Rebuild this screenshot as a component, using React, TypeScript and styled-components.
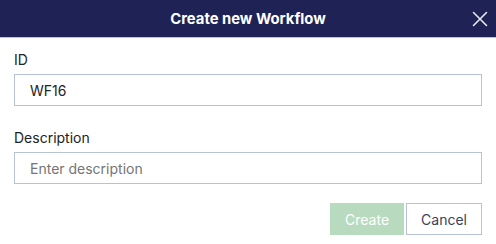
import styled, { createGlobalStyle } from 'styled-components'

const GlobalStyle = createGlobalStyle`
  html, body {
    margin: 0;
    padding: 0;
    background: #fff;
  }
  body {
    font-family: Inter, "Noto Sans", sans-serif;
  }
`

const App = () => {
    return (
        <>
            <GlobalStyle />
            <Dialog>
                <Header>
                    <Title>Create new Workflow</Title>
                    <CloseButton aria-label="Close">
                        <svg width="16" height="16" viewBox="0 0 16 16">
                            <path d="M1.5 1.5 L14.5 14.5 M14.5 1.5 L1.5 14.5" stroke="#e8e9f0" strokeWidth="1.6" strokeLinecap="round" />
                        </svg>
                    </CloseButton>
                </Header>
                <Body>
                    <Field>
                        <Label>ID</Label>
                        <Input defaultValue="WF16" />
                    </Field>
                    <Field>
                        <Label>Description</Label>
                        <Input placeholder="Enter description" />
                    </Field>
                </Body>
                <Footer>
                    <Button $primary disabled>Create</Button>
                    <Button>Cancel</Button>
                </Footer>
            </Dialog>
        </>
    );
}

const Dialog = styled.div`
  width: 496px;
  height: 244px;
  display: flex;
  flex-direction: column;
  background: #fff;
`

const Header = styled.div`
  position: relative;
  height: 37px;
  display: flex;
  align-items: center;
  justify-content: center;
  background: #1f2254;
  border-bottom: 1px solid #b9c4d6;
`

const Title = styled.h1`
  margin: 0;
  color: #fff;
  font-size: 14.8px;
  font-weight: 700;
`

const CloseButton = styled.button`
  position: absolute;
  right: 8px;
  top: 11px;
  padding: 0;
  border: none;
  background: none;
  display: flex;
  cursor: pointer;
`

const Body = styled.div`
  display: flex;
  flex-direction: column;
  gap: 24px;
  padding: 14px 14px 0 14px;
`

const Field = styled.div`
  display: flex;
  flex-direction: column;
  gap: 6px;
`

const Label = styled.label`
  color: #222;
  font-size: 14px;
  line-height: 16px;
`

const Input = styled.input`
  box-sizing: border-box;
  width: 100%;
  height: 32px;
  padding: 0 15px;
  border: 1px solid #b7c3d5;
  border-radius: 0;
  font-family: inherit;
  font-size: 14px;
  color: #222;
  outline: none;
  ::placeholder {
    color: #9a9ea6;
  }
`

const Footer = styled.div`
  display: flex;
  justify-content: flex-end;
  gap: 2px;
  padding: 19px 14px 0 14px;
`

const Button = styled.button<{ $primary?: boolean }>`
  box-sizing: border-box;
  height: 32px;
  padding: 0 14px;
  font-family: inherit;
  font-size: 14px;
  border-radius: 0;
  border: 1px solid ${p => (p.$primary ? '#b8dbbf' : '#b7c3d5')};
  background: ${p => (p.$primary ? '#b8dbbf' : '#fff')};
  color: ${p => (p.$primary ? '#fff' : '#3a4260')};
  min-width: ${p => (p.$primary ? '70px' : '73px')};
`

export default App;
